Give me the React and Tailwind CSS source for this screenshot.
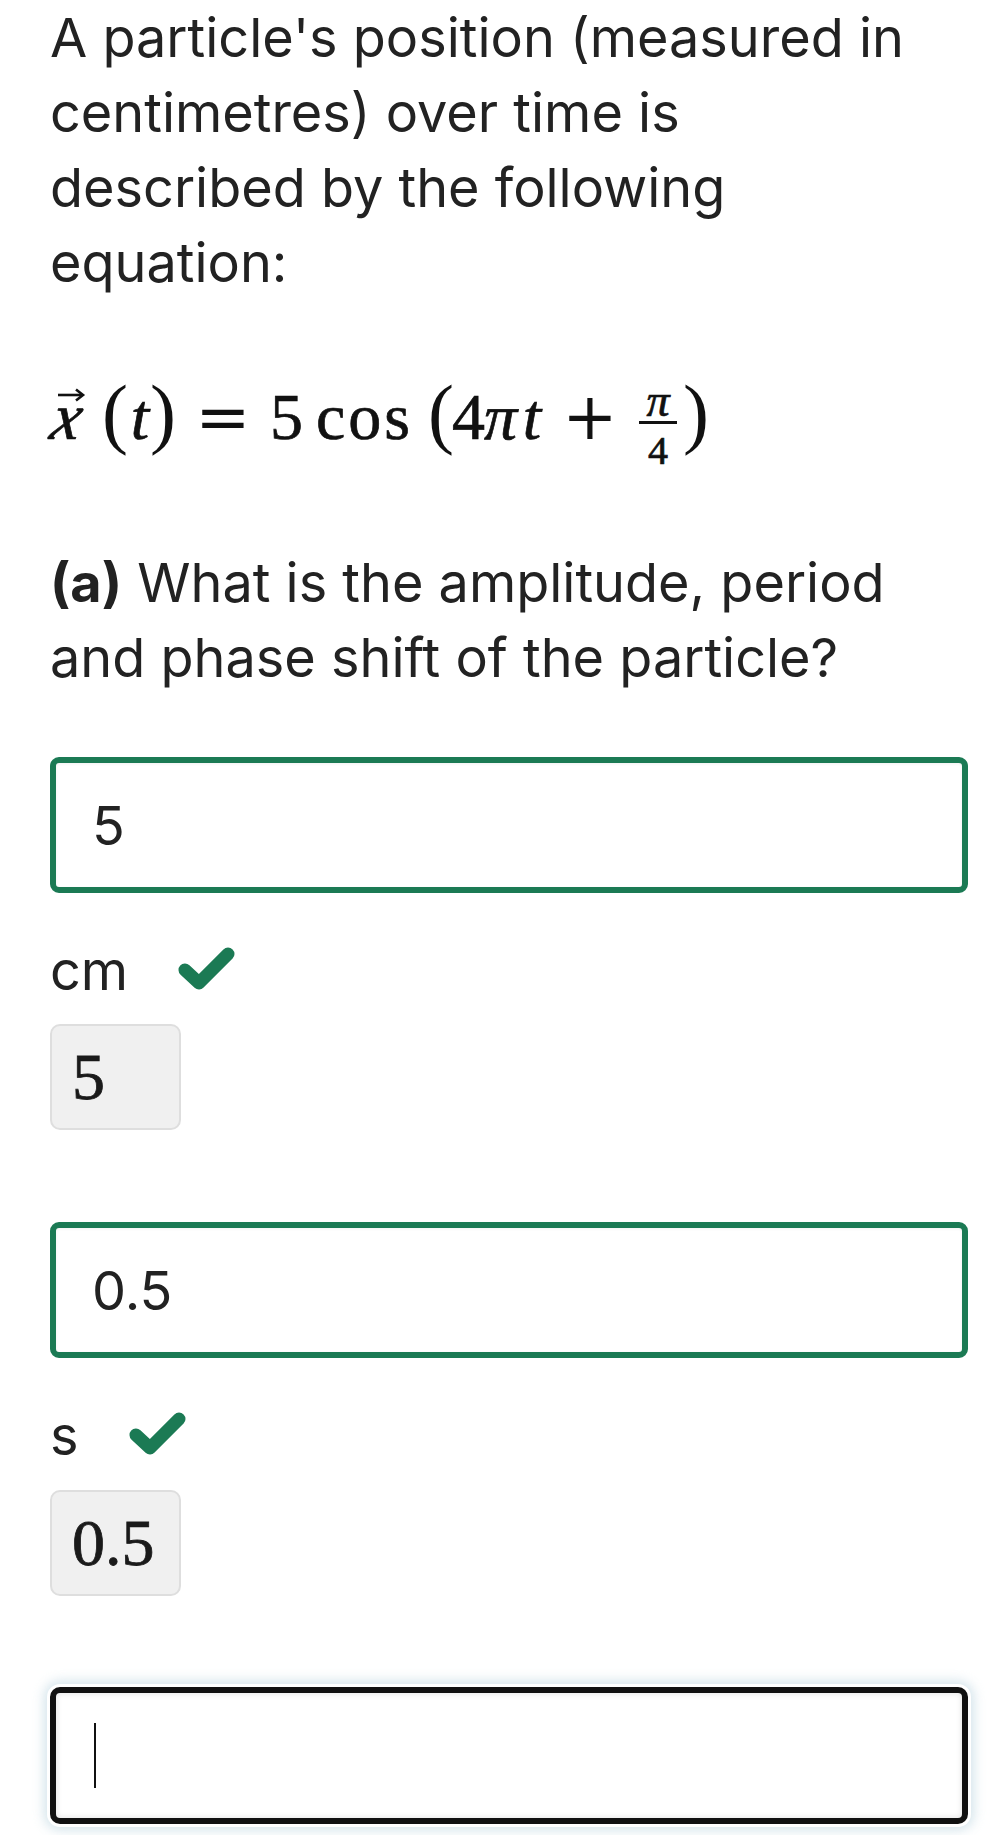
import React from "react";

const GREEN = "#1b7a54";

function Check() {
  return (
    <svg width="57" height="44" viewBox="0 0 57 44" className="inline-block align-baseline ml-[50px]">
      <polyline points="7,24 21,37 50,8" fill="none" stroke={GREEN} strokeWidth="13" strokeLinecap="round" strokeLinejoin="round" />
    </svg>
  );
}

function GreenBox({ value }) {
  return (
    <div className="h-[136px] w-full rounded-[9px] border-[6px] border-[#1b7a54] bg-white flex items-center pl-[36px] shadow-[inset_0_1px_3px_rgba(0,0,0,0.06)]">
      <span className="leading-[75px] text-[54px] text-[#222]">{value}</span>
    </div>
  );
}

function MathBox({ value }) {
  return (
    <div className="w-[131px] h-[106px] rounded-[10px] border-2 border-[#dedede] bg-[#f0f0f0] pl-[20px] text-[66px] leading-[102px] text-[#1a1a1a] [-webkit-text-stroke:0.8px_#1a1a1a] [font-family:'Liberation_Serif',serif]">
      {value}
    </div>
  );
}

function Equation() {
  const serif = "[font-family:'Liberation_Serif',serif]";
  return (
    <div className={`pt-[63px] pb-[78px] leading-[100px] text-[66px] text-[#111] whitespace-nowrap [-webkit-text-stroke:0.7px_#111] ${serif}`}>
      <span className="relative inline-block w-[36px] text-center">
        <span className="inline-block italic -skew-x-12">x</span>
        <svg width="30" height="14" viewBox="0 0 30 14" className="absolute left-[6px] top-[21px]">
          <line x1="2" y1="7" x2="26" y2="7" stroke="#111" strokeWidth="2.6" />
          <polyline points="20,1.5 27,7 20,12.5" fill="none" stroke="#111" strokeWidth="2.6" strokeLinejoin="miter" />
        </svg>
      </span>
      <span className="inline-block w-[26px] ml-[16px] text-center text-[78px] [-webkit-text-stroke:0px]">(</span>
      <span className="inline-block w-[20px] ml-[2px] text-center italic">t</span>
      <span className="inline-block w-[26px] text-center text-[78px] [-webkit-text-stroke:0px]">)</span>
      <span className="inline-block w-[56px] ml-[19px] text-center [font-family:'DejaVu_Serif',serif] font-light [-webkit-text-stroke:0px]">=</span>
      <span className="inline-block w-[32px] ml-[19px] text-center">5</span>
      <span className="inline-block w-[96px] ml-[14px] text-center tracking-[3px]">cos</span>
      <span className="inline-block w-[24px] ml-[16px] text-center text-[78px] [-webkit-text-stroke:0px]">(</span>
      <span className="inline-block w-[32px] text-center">4</span>
      <span className="inline-block w-[30px] text-center italic">π</span>
      <span className="inline-block w-[24px] ml-[6px] text-center italic">t</span>
      <span className="inline-block w-[56px] ml-[18px] text-center [font-family:'DejaVu_Serif',serif] [-webkit-text-stroke:0px]">+</span>
      <span className="inline-block w-[40px] ml-[20px] align-[-25px]">
        <span className="block h-[30px] leading-[30px] text-[46px] text-center italic">π</span>
        <span className="block h-[3px] mt-[5px] mx-[1px] bg-[#111]"></span>
        <span className="block h-[30px] mt-[12px] leading-[30px] text-[40px] text-center">4</span>
      </span>
      <span className="inline-block w-[24px] ml-[5px] text-center text-[78px] [-webkit-text-stroke:0px]">)</span>
    </div>
  );
}

export default function App() {
  return (
    <div className="w-[999px] min-h-[1835px] bg-white pl-[50px] pr-[31px] pt-0 pb-[12px] text-[#222] [font-family:'Inter',sans-serif]">
      <p className="w-[872px] text-[54px] leading-[75px]">
        A particle's position (measured in centimetres) over time is described by the following equation:
      </p>
      <Equation />
      <p className="w-[872px] text-[54px] leading-[75px]">
        <strong className="font-bold">(a)</strong> What is the amplitude, period and phase shift of the particle?
      </p>

      <div className="mt-[62px]">
        <GreenBox value="5" />
      </div>
      <div className="mt-[40px] text-[54px] leading-[75px]">
        <span>cm</span>
        <Check />
      </div>
      <div className="mt-[16px]">
        <MathBox value="5" />
      </div>

      <div className="mt-[92px]">
        <GreenBox value="0.5" />
      </div>
      <div className="mt-[40px] text-[54px] leading-[75px]">
        <span>s</span>
        <Check />
      </div>
      <div className="mt-[17px]">
        <MathBox value="0.5" />
      </div>

      <div className="mt-[91px] h-[137px] w-full rounded-[10px] border-[6px] border-[#111] bg-white flex items-center pl-[38px] shadow-[0_0_0_3px_#ffffff,0_0_12px_6px_rgba(160,195,210,0.45),inset_0_0_6px_rgba(0,0,0,0.12)]">
        <div className="w-[2px] h-[65px] bg-[#111]"></div>
      </div>
    </div>
  );
}
